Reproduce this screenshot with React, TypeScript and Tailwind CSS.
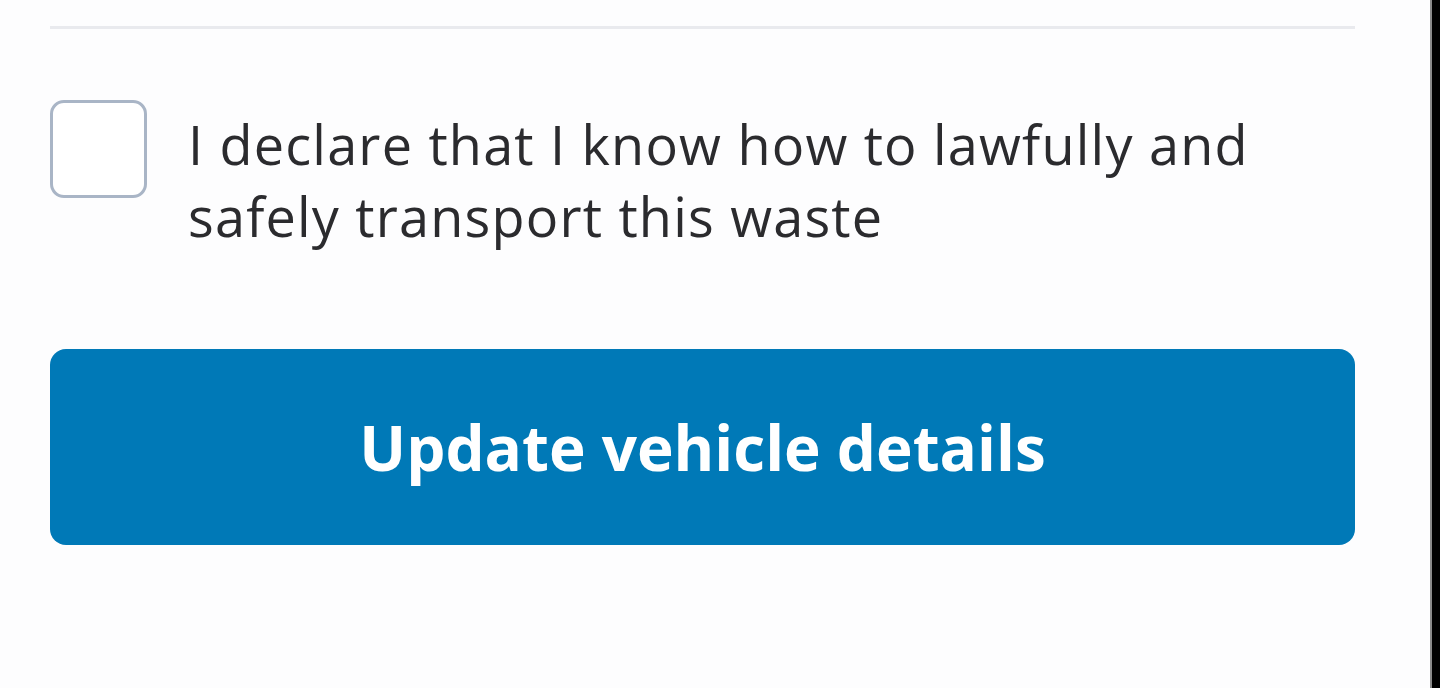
import React, { useState } from 'react';

const App: React.FC = () => {
  const [agreed, setAgreed] = useState(false);

  return (
    <div className="flex h-[688px] bg-[#fdfdfe]" style={{ fontFamily: '"Open Sans", "Noto Sans", sans-serif' }}>
      <div className="flex-1 pl-[50px] pr-[75px] pt-[26px]">
        <div className="border-t-[3px] border-[#e9eaee]" />

        <label className="mt-[71px] flex items-start gap-[41px] cursor-pointer">
          <input
            type="checkbox"
            checked={agreed}
            onChange={(e) => setAgreed(e.target.checked)}
            className="sr-only"
          />
          <span className="w-[97px] h-[98px] shrink-0 rounded-[14px] border-[3px] border-[#a9b5c6] bg-white" />
          <span className="mt-[8px] text-[54px] leading-[72px] tracking-[1.2px] text-[#2b2b2e]">
            I declare that I know how to lawfully and safely transport this waste
          </span>
        </label>

        <button className="mt-[97px] w-full h-[196px] rounded-[16px] bg-[#0079b7] text-white text-[62px] font-bold">
          Update vehicle details
        </button>
      </div>
      <div className="w-[10px] bg-black border-l-2 border-[#8a8a8a]" />
    </div>
  );
};

export default App;
